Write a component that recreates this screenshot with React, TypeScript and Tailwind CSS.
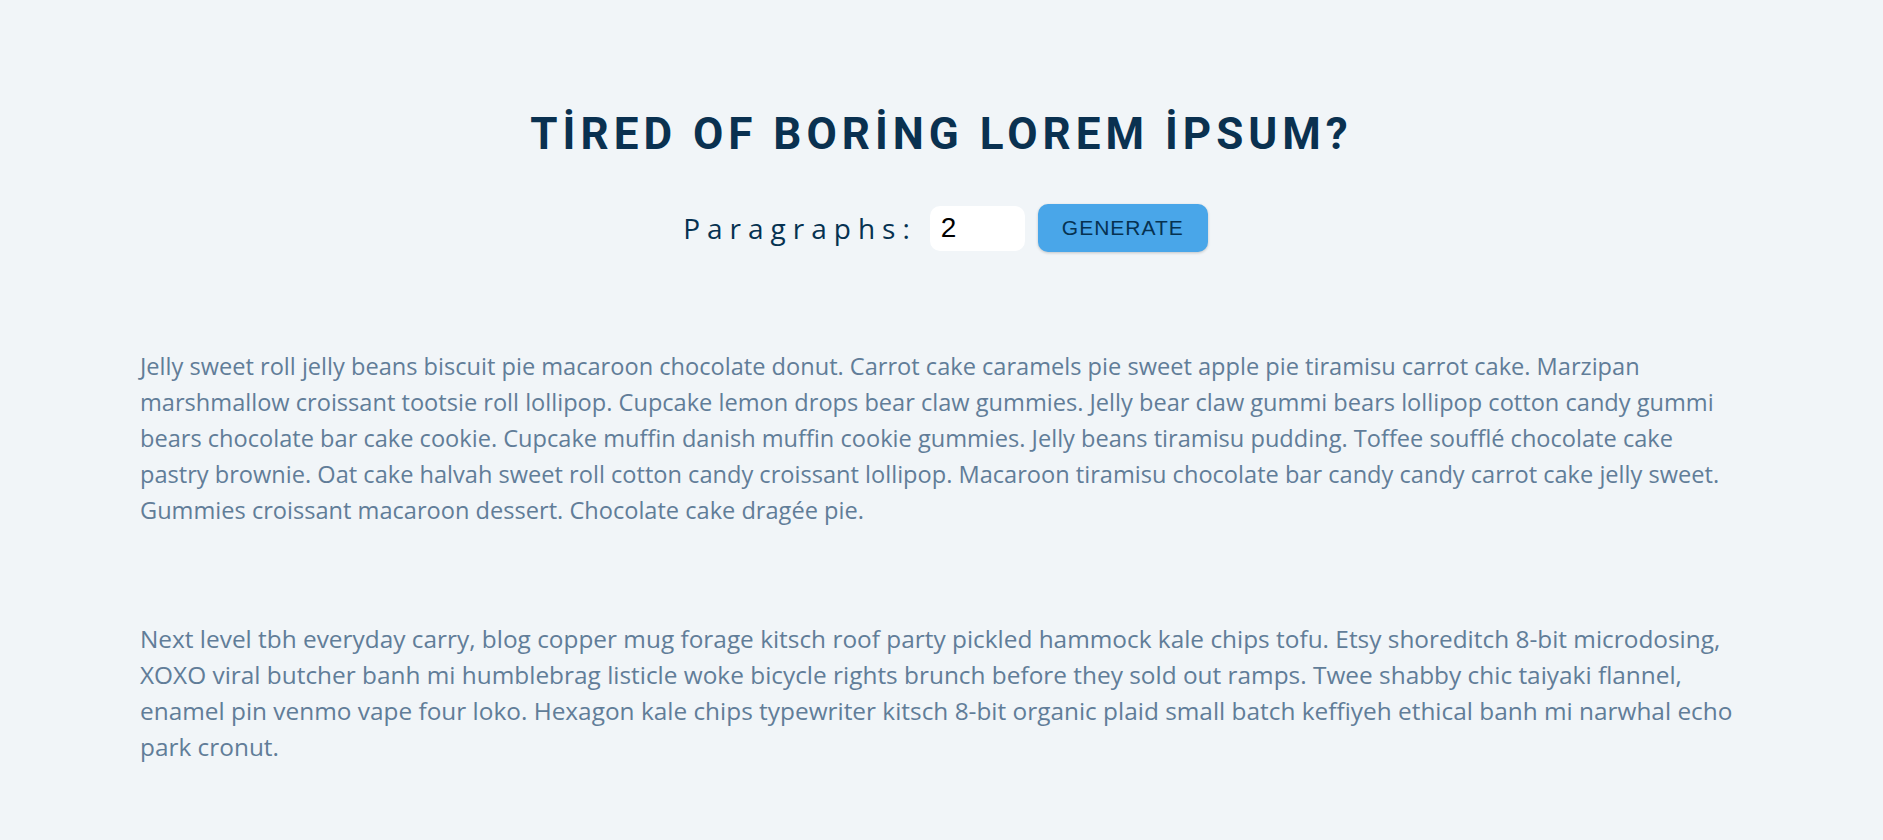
import { useState } from 'react';

const paragraphs = [
  {
    size: 'text-[23.6px]',
    text: 'Jelly sweet roll jelly beans biscuit pie macaroon chocolate donut. Carrot cake caramels pie sweet apple pie tiramisu carrot cake. Marzipan marshmallow croissant tootsie roll lollipop. Cupcake lemon drops bear claw gummies. Jelly bear claw gummi bears lollipop cotton candy gummi bears chocolate bar cake cookie. Cupcake muffin danish muffin cookie gummies. Jelly beans tiramisu pudding. Toffee soufflé chocolate cake pastry brownie. Oat cake halvah sweet roll cotton candy croissant lollipop. Macaroon tiramisu chocolate bar candy candy carrot cake jelly sweet. Gummies croissant macaroon dessert. Chocolate cake dragée pie.',
  },
  {
    size: 'text-[24.4px]',
    text: 'Next level tbh everyday carry, blog copper mug forage kitsch roof party pickled hammock kale chips tofu. Etsy shoreditch 8-bit microdosing, XOXO viral butcher banh mi humblebrag listicle woke bicycle rights brunch before they sold out ramps. Twee shabby chic taiyaki flannel, enamel pin venmo vape four loko. Hexagon kale chips typewriter kitsch 8-bit organic plaid small batch keffiyeh ethical banh mi narwhal echo park cronut.',
  },
];

export default function App() {
  const [count, setCount] = useState(2);

  return (
    <div className="min-h-screen bg-[#f1f5f8] font-['Open_Sans',sans-serif]">
      <section className="px-[140px] pt-[112px]">
        <h1 className="text-center font-['Roboto',sans-serif] text-[44px] font-bold leading-none tracking-[5px] text-[#0a3150]">
          TİRED OF BORİNG LOREM İPSUM?
        </h1>

        <form
          className="mt-[48px] flex items-center justify-center pl-[8px]"
          onSubmit={(e) => e.preventDefault()}
        >
          <label htmlFor="amount" className="text-[28px] tracking-[7px] text-[#063251]">
            Paragraphs:
          </label>
          <input
            id="amount"
            type="number"
            value={count}
            onChange={(e) => setCount(Number(e.target.value))}
            className="ml-[13px] h-[45px] w-[95px] appearance-none rounded-[10px] bg-white pl-[11px] font-['Liberation_Sans',sans-serif] text-[28px] text-black outline-none [&::-webkit-inner-spin-button]:appearance-none"
          />
          <button
            type="submit"
            className="ml-[13px] h-[48px] w-[170px] rounded-[10px] bg-[#49a6e9] font-['Liberation_Sans',sans-serif] text-[21px] tracking-[1px] text-[#063251] shadow-[0_1px_3px_rgba(0,0,0,0.2)]"
          >
            GENERATE
          </button>
        </form>

        <article className="mt-[96px]">
          {paragraphs.slice(0, count).map((p, i) => (
            <p key={i} className={`mb-[93px] leading-[36px] text-[#617d98] ${p.size}`}>
              {p.text}
            </p>
          ))}
        </article>
      </section>
    </div>
  );
}
